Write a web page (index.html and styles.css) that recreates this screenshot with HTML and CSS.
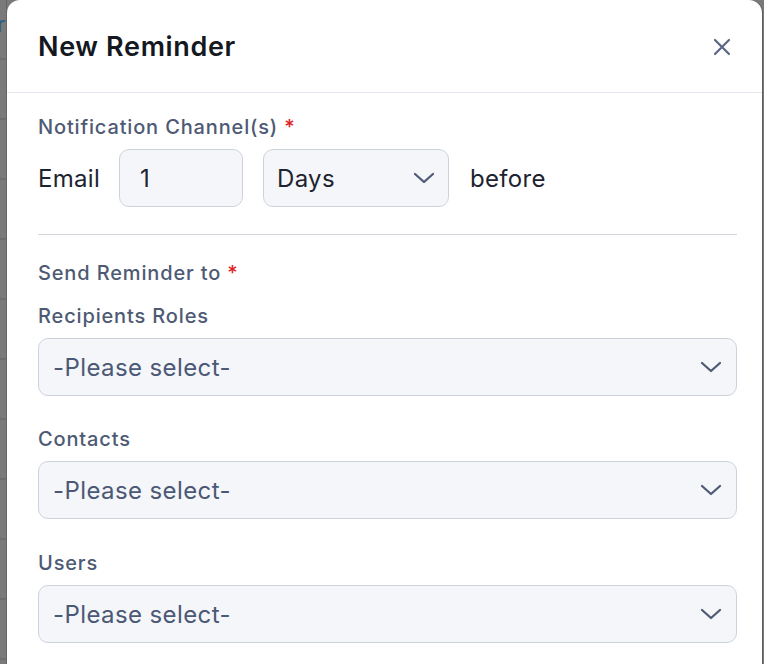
FILE: index.html
```html
<!DOCTYPE html>
<html>
<head>
<meta charset="utf-8">
<link rel="stylesheet" href="styles.css">
</head>
<body>
<div class="backdrop">
  <div class="behind">
    <span class="behind-glyph">r</span>
  </div>
  <div class="modal">
    <div class="modal-header">
      <h2 class="modal-title">New Reminder</h2>
      <button class="close-btn" aria-label="Close">
        <svg width="18" height="18" viewBox="0 0 18 18"><path d="M2 2L16 16M16 2L2 16" stroke="#5a6784" stroke-width="2.2" stroke-linecap="round"/></svg>
      </button>
    </div>
    <div class="modal-body">
      <div class="label">Notification Channel(s) <span class="req">*</span></div>
      <div class="channel-row">
        <span class="row-text">Email</span>
        <div class="field num-field">1</div>
        <div class="field days-field">
          <span>Days</span>
          <svg class="chev" width="22" height="12" viewBox="0 0 22 12"><path d="M2 2L11 10L20 2" fill="none" stroke="#4f5b75" stroke-width="2.3" stroke-linecap="round" stroke-linejoin="round"/></svg>
        </div>
        <span class="row-text">before</span>
      </div>
      <hr class="divider">
      <div class="label section-label">Send Reminder to <span class="req">*</span></div>
      <div class="label sub-label">Recipients Roles</div>
      <div class="field select-field">
        <span>-Please select-</span>
        <svg class="chev" width="22" height="12" viewBox="0 0 22 12"><path d="M2 2L11 10L20 2" fill="none" stroke="#4f5b75" stroke-width="2.3" stroke-linecap="round" stroke-linejoin="round"/></svg>
      </div>
      <div class="label group-label">Contacts</div>
      <div class="field select-field">
        <span>-Please select-</span>
        <svg class="chev" width="22" height="12" viewBox="0 0 22 12"><path d="M2 2L11 10L20 2" fill="none" stroke="#4f5b75" stroke-width="2.3" stroke-linecap="round" stroke-linejoin="round"/></svg>
      </div>
      <div class="label group-label">Users</div>
      <div class="field select-field">
        <span>-Please select-</span>
        <svg class="chev" width="22" height="12" viewBox="0 0 22 12"><path d="M2 2L11 10L20 2" fill="none" stroke="#4f5b75" stroke-width="2.3" stroke-linecap="round" stroke-linejoin="round"/></svg>
      </div>
    </div>
  </div>
</div>
</body>
</html>
```

FILE: styles.css
```css
* { box-sizing: border-box; }
html, body {
  margin: 0;
  padding: 0;
  height: 100%;
  overflow: hidden;
}
body {
  background: #7a7a7a;
  font-family: Inter, "Noto Sans", sans-serif;
}
.backdrop {
  display: flex;
  height: 664px;
  padding-right: 2px;
}
.behind {
  width: 7px;
  flex: none;
  position: relative;
  overflow: hidden;
  background: repeating-linear-gradient(to bottom, #7a7a7a 0, #7a7a7a 58px, #6e6e6e 58px, #6e6e6e 60px);
  border-right: 1px solid #666;
}
.behind-glyph {
  position: absolute;
  left: -3px;
  top: 12px;
  color: #2d5f8a;
  font-size: 22px;
  line-height: 24px;
}
.modal {
  flex: 1;
  background: #ffffff;
  border-radius: 13px 13px 0 0;
  box-shadow: 1px 0 0 #5e5e5e;
  height: 680px;
  overflow: hidden;
}
.modal-header {
  height: 93px;
  border-bottom: 1px solid #e6e6ef;
  display: flex;
  align-items: center;
  justify-content: space-between;
  padding: 0 31px 0 31px;
}
.modal-title {
  margin: 0;
  font-size: 27px;
  font-weight: 600;
  color: #141821;
  letter-spacing: 0.65px;
}
.close-btn {
  border: 0;
  background: none;
  padding: 0;
  width: 18px;
  height: 18px;
  display: flex;
  margin-top: 1px;
}
.modal-body {
  padding: 22px 25px 0 31px;
}
.label {
  font-size: 20px;
  line-height: 24px;
  font-weight: 500;
  letter-spacing: 0.85px;
  color: #4e5a74;
}
.req {
  color: #e02424;
}
.channel-row {
  display: flex;
  align-items: center;
  margin-top: 10px;
  height: 58px;
}
.row-text {
  font-size: 24px;
  letter-spacing: 0.3px;
  color: #1d2330;
}
.field {
  height: 58px;
  background: #f5f6f9;
  border: 1px solid #cdd2dd;
  border-radius: 10px;
  display: flex;
  align-items: center;
  font-size: 24px;
  letter-spacing: 0.3px;
  color: #1d2330;
}
.num-field {
  width: 124px;
  margin-left: 19px;
  padding-left: 20px;
}
.days-field {
  width: 186px;
  margin-left: 20px;
  margin-right: 21px;
  padding: 0 13px 0 13px;
  justify-content: space-between;
}
.chev { display: block; }
.divider {
  border: 0;
  border-top: 1px solid #d3d6dc;
  margin: 27px 0 0 0;
}
.section-label {
  margin-top: 26px;
}
.sub-label {
  margin-top: 19px;
}
.group-label {
  margin-top: 31px;
}
.group-label ~ .group-label {
  margin-top: 32px;
}
.select-field {
  margin-top: 10px;
  padding: 0 14px 0 14px;
  justify-content: space-between;
  letter-spacing: 0.4px;
  color: #4b5876;
}
```
